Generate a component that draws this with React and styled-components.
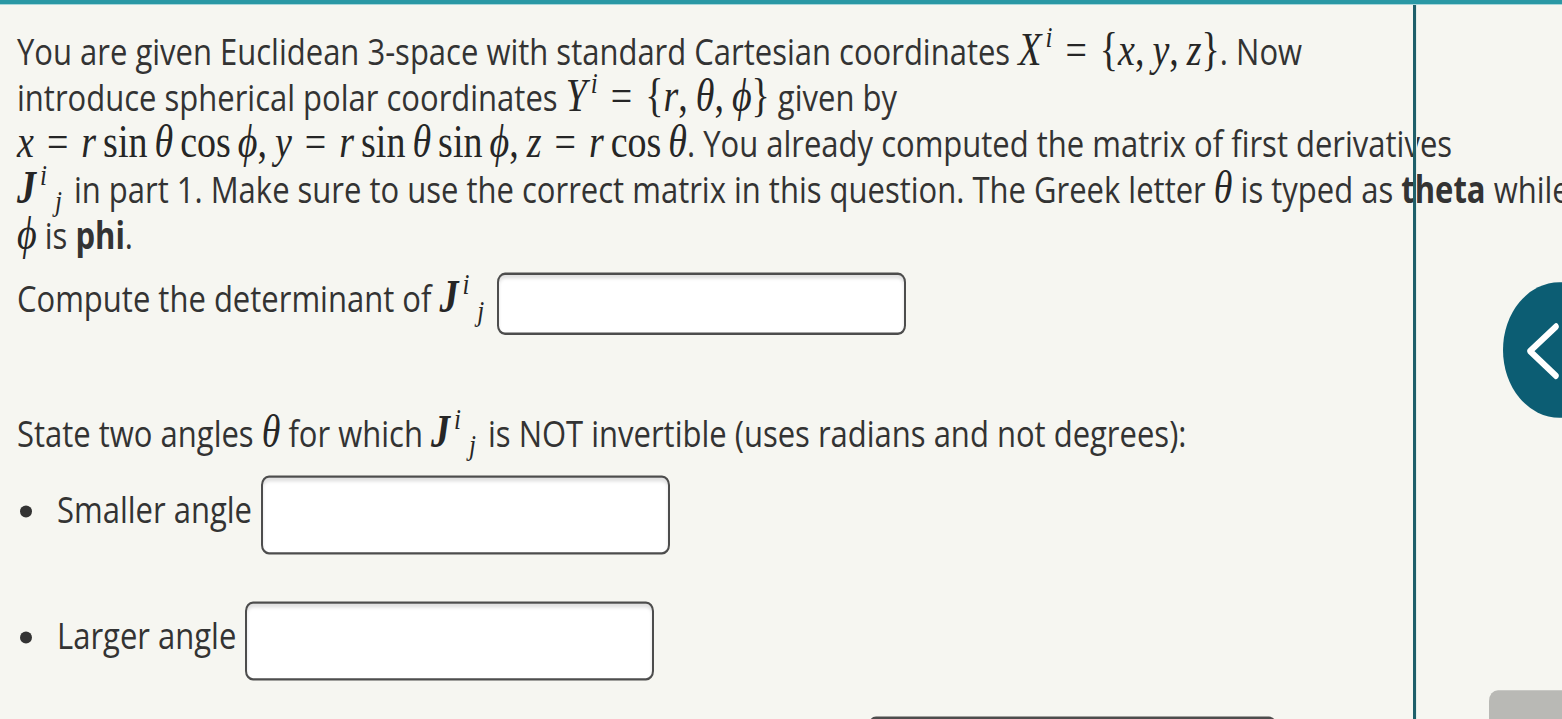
import React from 'react';
import styled, { createGlobalStyle } from 'styled-components';

const GlobalStyle = createGlobalStyle`
	html, body {
		margin: 0;
		padding: 0;
		background: #f6f6f1;
		overflow: hidden;
	}
	body {
		font-family: 'Open Sans', 'Noto Sans', sans-serif;
		color: #333;
	}
`;

const Page = styled.div`
	position: relative;
	width: 1562px;
	height: 719px;
	overflow: hidden;
	background: #f6f6f1;
`;

const TopBar = styled.div`
	height: 4px;
	background: #2a98a5;
	border-bottom: 1px solid #a7d6da;
`;

/* the capture is stretched vertically, so the sheet is laid out flat and scaled */
const Sheet = styled.div`
	position: relative;
	width: 1562px;
	height: 595px;
	transform: scaleY(1.2);
	transform-origin: top left;
`;

const Content = styled.main`
	display: flex;
	flex-direction: column;
	padding: 19px 0 0 17px;
	width: 1700px;
	font-size: 31px;
	line-height: 38.3px;
	white-space: nowrap;
`;

const Para = styled.p`
	margin: 0;
`;

const Math = styled.span`
	font-family: 'Liberation Serif', 'DejaVu Serif', serif;
	font-size: 38px;
	line-height: 28px;
	color: #262626;
	white-space: nowrap;
	margin-right: ${(p) => p.$mr || 0}px;
`;

const V = styled.i`
	font-style: italic;
	font-weight: ${(p) => (p.$bold ? 700 : 400)};
`;

const Up = styled.span`
	font-style: normal;
	margin: 0 ${(p) => p.$r || 0}px 0 ${(p) => p.$l || 0}px;
`;

const Rel = styled.span`
	font-style: normal;
	margin: 0 13px;
`;

const Sup = styled.span`
	font-style: italic;
	font-size: 25px;
	line-height: 14px;
	vertical-align: 15px;
	margin-left: 4px;
`;

const Sub = styled.span`
	font-style: italic;
	font-size: 25px;
	line-height: 14px;
	vertical-align: -7px;
	margin-left: 8px;
`;

const Bold = styled.b`
	font-weight: 700;
`;

const Row = styled.div`
	display: flex;
	align-items: center;
	gap: 9px;
	margin-top: ${(p) => p.$top}px;
	padding-left: ${(p) => (p.$bullet ? 40 : 0)}px;
	position: relative;

	&::before {
		content: '';
		display: ${(p) => (p.$bullet ? 'block' : 'none')};
		position: absolute;
		left: 3px;
		top: 50%;
		width: 12px;
		height: 10px;
		margin-top: -8px;
		border-radius: 50%;
		background: #333;
	}
`;

const Label = styled.span`
	position: relative;
	top: ${(p) => (p.$plain ? 0 : -5)}px;
`;

const Answer = styled.div`
	box-sizing: border-box;
	width: 409px;
	height: ${(p) => p.$h}px;
	margin-left: ${(p) => p.$left || 0}px;
	background: #fff;
	border: 2px solid #4d4d4d;
	border-radius: 8px;
	box-shadow: inset 0 3px 3px rgba(0, 0, 0, 0.12);
	flex-shrink: 0;
`;

const Divider = styled.div`
	position: absolute;
	left: 1413px;
	top: 0;
	bottom: 0;
	width: 3px;
	background: #1f5f6a;
	border-right: 1px solid #e4ece8;
`;

const NavButton = styled.button`
	position: absolute;
	left: 1503px;
	top: 231px;
	width: 113px;
	height: 113px;
	border-radius: 50%;
	border: none;
	background: #0c5d73;
	padding: 0;
	display: block;
	svg {
		display: block;
	}
`;

const Thumb = styled.div`
	position: absolute;
	left: 1489px;
	top: 571px;
	width: 90px;
	height: 50px;
	border-radius: 9px;
	background: #b9b9b5;
`;

const J = () => (
	<Math $mr={4}>
		<V $bold>J</V>
		<Sup>i</Sup>
		<Sub>j</Sub>
	</Math>
);

const App = () => {
	return (
		<Page>
			<GlobalStyle />
			<TopBar />
			<Sheet>
				<Content>
					<Para>
						You are given Euclidean 3-space with standard Cartesian coordinates{' '}
						<Math>
							<V>X</V>
							<Sup>i</Sup>
							<Rel>=</Rel>
							<Up>{'{'}</Up>
							<V>x</V>
							<Up $r={8}>,</Up>
							<V>y</V>
							<Up $r={8}>,</Up>
							<V>z</V>
							<Up>{'}'}</Up>
						</Math>
						. Now
						<br />
						introduce spherical polar coordinates{' '}
						<Math>
							<V>Y</V>
							<Sup>i</Sup>
							<Rel>=</Rel>
							<Up>{'{'}</Up>
							<V>r</V>
							<Up $r={8}>,</Up>
							<V>θ</V>
							<Up $r={8}>,</Up>
							<V>ϕ</V>
							<Up>{'}'}</Up>
						</Math>{' '}
						given by
						<br />
						<Math>
							<V>x</V>
							<Rel>=</Rel>
							<V>r</V>
							<Up $l={7} $r={7}>sin</Up>
							<V>θ</V>
							<Up $l={7} $r={7}>cos</Up>
							<V>ϕ</V>
							<Up $r={8}>,</Up>
							<V>y</V>
							<Rel>=</Rel>
							<V>r</V>
							<Up $l={7} $r={7}>sin</Up>
							<V>θ</V>
							<Up $l={7} $r={7}>sin</Up>
							<V>ϕ</V>
							<Up $r={8}>,</Up>
							<V>z</V>
							<Rel>=</Rel>
							<V>r</V>
							<Up $l={7} $r={7}>cos</Up>
							<V>θ</V>
						</Math>
						. You already computed the matrix of first derivatives
						<br />
						<J /> in part 1. Make sure to use the correct matrix in this question. The Greek letter{' '}
						<Math>
							<V>θ</V>
						</Math>{' '}
						is typed as <Bold>theta</Bold> while
						<br />
						<Math>
							<V>ϕ</V>
						</Math>{' '}
						is <Bold>phi</Bold>.
					</Para>

					<Row $top={13}>
						<Label>
							Compute the determinant of <J />
						</Label>
						<Answer $h={52} />
					</Row>

					<Row $top={62}>
						<Label $plain>
							State two angles{' '}
							<Math>
								<V>θ</V>
							</Math>{' '}
							for which <J /> is NOT invertible (uses radians and not degrees):
						</Label>
					</Row>

					<Row $top={16} $bullet>
						<Label>Smaller angle</Label>
						<Answer $h={66} />
					</Row>

					<Row $top={39} $bullet>
						<Label>Larger angle</Label>
						<Answer $h={66} />
					</Row>

					<Row $top={30}>
						<Answer $h={66} $left={851} />
					</Row>
				</Content>

				<Divider />
				<NavButton aria-label="Previous">
					<svg width="113" height="113" viewBox="0 0 113 113">
						<polyline
							points="53,37 27,57.5 53,78"
							fill="none"
							stroke="#fff"
							strokeWidth="5.5"
							strokeLinecap="round"
							strokeLinejoin="round"
						/>
					</svg>
				</NavButton>
				<Thumb />
			</Sheet>
		</Page>
	);
};

export default App;
